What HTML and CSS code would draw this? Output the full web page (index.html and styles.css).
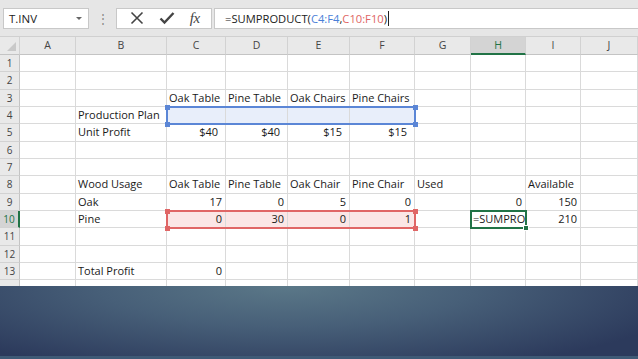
FILE: index.html
```html
<!DOCTYPE html>
<html lang="en">
<head>
    <meta charset="UTF-8">
    <title>Wood Usage - SUMPRODUCT</title>
    <link rel="stylesheet" href="styles.css">
</head>
<body>
    <!-- formula bar -->
    <div class="toolbar">
        <div class="namebox">
            <span class="name">T.INV</span>
            <span class="caret"></span>
        </div>
        <div class="dots">&#8942;</div>
        <div class="fbuttons">
            <svg class="ico" width="14" height="14" viewBox="0 0 14 14">
                <path d="M1.5 1.5 L12.5 12.5 M12.5 1.5 L1.5 12.5" stroke="#444" stroke-width="1.6" fill="none"/>
            </svg>
            <svg class="ico" width="16" height="14" viewBox="0 0 16 14">
                <path d="M1.5 7.5 L5.5 11.5 L14.5 2" stroke="#444" stroke-width="2.4" fill="none"/>
            </svg>
            <span class="fx">fx</span>
        </div>
        <div class="formula">=SUMPRODUCT(<span class="ref-blue">C4:F4</span>,<span class="ref-red">C10:F10</span>)<span class="cursor"></span></div>
    </div>

    <div class="sheet">
        <div class="grid">
            <div class="ch corner"><span class="tri"></span></div>
            <div class="ch">A</div><div class="ch">B</div><div class="ch">C</div><div class="ch">D</div><div class="ch">E</div>
            <div class="ch">F</div><div class="ch">G</div><div class="ch active-col">H</div><div class="ch">I</div><div class="ch">J</div>

            <div class="rh">1</div><div class="c"></div><div class="c"></div><div class="c"></div><div class="c"></div><div class="c"></div><div class="c"></div><div class="c"></div><div class="c"></div><div class="c"></div><div class="c"></div>
            <div class="rh">2</div><div class="c"></div><div class="c"></div><div class="c"></div><div class="c"></div><div class="c"></div><div class="c"></div><div class="c"></div><div class="c"></div><div class="c"></div><div class="c"></div>
            <div class="rh">3</div><div class="c"></div><div class="c"></div>
            <div class="c">Oak Table</div><div class="c">Pine Table</div><div class="c">Oak Chairs</div><div class="c">Pine Chairs</div>
            <div class="c"></div><div class="c"></div><div class="c"></div><div class="c"></div>
            <div class="rh">4</div><div class="c"></div><div class="c">Production Plan</div>
            <div class="c fill-blue"></div><div class="c fill-blue"></div><div class="c fill-blue"></div><div class="c fill-blue"></div>
            <div class="c"></div><div class="c"></div><div class="c"></div><div class="c"></div>
            <div class="rh">5</div><div class="c"></div><div class="c">Unit Profit</div>
            <div class="c money">$40</div><div class="c money">$40</div><div class="c money">$15</div><div class="c money">$15</div>
            <div class="c"></div><div class="c"></div><div class="c"></div><div class="c"></div>
            <div class="rh">6</div><div class="c"></div><div class="c"></div><div class="c"></div><div class="c"></div><div class="c"></div><div class="c"></div><div class="c"></div><div class="c"></div><div class="c"></div><div class="c"></div>
            <div class="rh">7</div><div class="c"></div><div class="c"></div><div class="c"></div><div class="c"></div><div class="c"></div><div class="c"></div><div class="c"></div><div class="c"></div><div class="c"></div><div class="c"></div>
            <div class="rh">8</div><div class="c"></div><div class="c">Wood Usage</div>
            <div class="c">Oak Table</div><div class="c">Pine Table</div><div class="c">Oak Chair</div><div class="c">Pine Chair</div>
            <div class="c">Used</div><div class="c"></div><div class="c">Available</div><div class="c"></div>
            <div class="rh">9</div><div class="c"></div><div class="c">Oak</div>
            <div class="c num">17</div><div class="c num">0</div><div class="c num">5</div><div class="c num">0</div>
            <div class="c"></div><div class="c num">0</div><div class="c num">150</div><div class="c"></div>
            <div class="rh active-row">10</div><div class="c"></div><div class="c">Pine</div>
            <div class="c num fill-red">0</div><div class="c num fill-red">30</div><div class="c num fill-red">0</div><div class="c num fill-red">1</div>
            <div class="c"></div><div class="c editing">=SUMPRO</div><div class="c num">210</div><div class="c"></div>
            <div class="rh">11</div><div class="c"></div><div class="c"></div><div class="c"></div><div class="c"></div><div class="c"></div><div class="c"></div><div class="c"></div><div class="c"></div><div class="c"></div><div class="c"></div>
            <div class="rh">12</div><div class="c"></div><div class="c"></div><div class="c"></div><div class="c"></div><div class="c"></div><div class="c"></div><div class="c"></div><div class="c"></div><div class="c"></div><div class="c"></div>
            <div class="rh">13</div><div class="c"></div><div class="c">Total Profit</div><div class="c num">0</div>
            <div class="c"></div><div class="c"></div><div class="c"></div><div class="c"></div><div class="c"></div><div class="c"></div><div class="c"></div>
            <div class="rh"></div><div class="c"></div><div class="c"></div><div class="c"></div><div class="c"></div><div class="c"></div><div class="c"></div><div class="c"></div><div class="c"></div><div class="c"></div><div class="c"></div>
        </div>

        <!-- range highlights drawn over the grid -->
        <div class="range range-blue">
            <span class="knob tl"></span><span class="knob tr"></span><span class="knob bl"></span><span class="knob br"></span>
        </div>
        <div class="range range-red">
            <span class="knob tl"></span><span class="knob tr"></span><span class="knob bl"></span><span class="knob br"></span>
        </div>
        <div class="active-cell"><span class="fill-handle"></span></div>
    </div>

    <div class="slide-footer"></div>
</body>
</html>
```

FILE: styles.css
```css
* {
    box-sizing: border-box;
}
body {
    margin: 0;
    width: 638px;
    height: 359px;
    overflow: hidden;
    font-family: 'Open Sans', 'Liberation Sans', sans-serif;
    font-size: 11px;
    color: #1a1a1a;
    background-color: #fff;
}

/* ---- formula bar ---- */
.toolbar {
    height: 37px;
    background-color: #e6e6e6;
    display: flex;
    align-items: center;
    padding-left: 3px;
    border-bottom: 1px solid #d0d0d0;
}
.namebox {
    width: 86px;
    height: 21px;
    background-color: #fff;
    border: 1px solid #c8c8c8;
    display: flex;
    align-items: center;
    justify-content: space-between;
    padding: 0 6px 0 5px;
}
.name {
    font-size: 11.5px;
    color: #222;
}
.caret {
    width: 0;
    height: 0;
    border-left: 3px solid transparent;
    border-right: 3px solid transparent;
    border-top: 3px solid #666;
}
.dots {
    width: 27px;
    text-align: center;
    color: #888;
    font-size: 12px;
}
.fbuttons {
    width: 96px;
    height: 21px;
    background-color: #fff;
    border: 1px solid #c8c8c8;
    display: flex;
    align-items: center;
    justify-content: space-around;
    padding: 0 4px 0 6px;
}
.fx {
    font-family: 'Liberation Serif', 'DejaVu Serif', serif;
    font-style: italic;
    font-size: 15px;
    color: #444;
    letter-spacing: -0.5px;
}
.formula {
    flex: 1;
    height: 21px;
    margin-left: 2px;
    background-color: #fff;
    border: 1px solid #c8c8c8;
    border-right: none;
    display: flex;
    align-items: center;
    padding-left: 10px;
    font-size: 11.2px;
    color: #222;
}
.ref-blue {
    color: #4a7fd8;
}
.ref-red {
    color: #e06464;
}
.cursor {
    width: 1px;
    height: 15px;
    background-color: #222;
    margin-left: 1px;
}

/* ---- grid ---- */
.sheet {
    position: relative;
    height: 249px;
    overflow: hidden;
}
.grid {
    display: grid;
    grid-template-columns: 20px 56px 91px 59px 62px 62px 65px 56px 55px 55px 57px;
    grid-template-rows: 18px repeat(14, 17.33px);
}
.c {
    border-right: 1px solid #dadada;
    border-bottom: 1px solid #dadada;
    padding: 0 3px 0 2px;
    line-height: 16px;
    white-space: nowrap;
    overflow: visible;
}
.num {
    text-align: right;
}
.money {
    text-align: right;
    padding-right: 7px;
}
.editing {
    overflow: hidden;
    padding-left: 2px;
}
.fill-blue {
    background-color: #e8eefa;
}
.fill-red {
    background-color: #fbe6e6;
}
.ch {
    background-color: #e9e9e9;
    border-right: 1px solid #d2d2d2;
    border-bottom: 1px solid #c4c4c4;
    text-align: center;
    line-height: 17px;
    color: #444;
    font-size: 10.5px;
}
.corner {
    position: relative;
}
.tri {
    position: absolute;
    right: 3px;
    bottom: 3px;
    width: 0;
    height: 0;
    border-left: 9px solid transparent;
    border-bottom: 9px solid #c9c9c9;
}
.active-col {
    background-color: #d4d4d4;
    color: #217346;
    border-bottom: 2px solid #217346;
}
.rh {
    background-color: #e9e9e9;
    border-right: 1px solid #c4c4c4;
    border-bottom: 1px solid #d2d2d2;
    text-align: center;
    line-height: 16px;
    color: #444;
    font-size: 10px;
}
.active-row {
    background-color: #d4d4d4;
    color: #217346;
    border-right: 2px solid #217346;
}

/* ---- overlays ---- */
.range {
    position: absolute;
    left: 166px;
    width: 250px;
    height: 19px;
    border: 2px solid #5b86d6;
}
.range-blue {
    top: 69px;
}
.range-red {
    top: 173px;
    border-color: #e06666;
}
.knob {
    position: absolute;
    width: 5px;
    height: 5px;
    background-color: #5b86d6;
}
.range-red .knob {
    background-color: #e06666;
}
.tl { left: -3.5px; top: -3.5px; }
.tr { right: -3.5px; top: -3.5px; }
.bl { left: -3.5px; bottom: -3.5px; }
.br { right: -3.5px; bottom: -3.5px; }
.active-cell {
    position: absolute;
    left: 470px;
    top: 173px;
    width: 57px;
    height: 19px;
    border: 2px solid #217346;
}
.fill-handle {
    position: absolute;
    right: -4px;
    bottom: -4px;
    width: 6px;
    height: 6px;
    background-color: #217346;
    border: 1px solid #fff;
}

/* ---- slide background below ---- */
.slide-footer {
    height: 73px;
    background: radial-gradient(ellipse 65% 130% at 45% 0%, #5b7888 0%, #475f78 45%, #2c3a5c 100%);
    border-bottom: 3px solid #3f5a76;
}
```
